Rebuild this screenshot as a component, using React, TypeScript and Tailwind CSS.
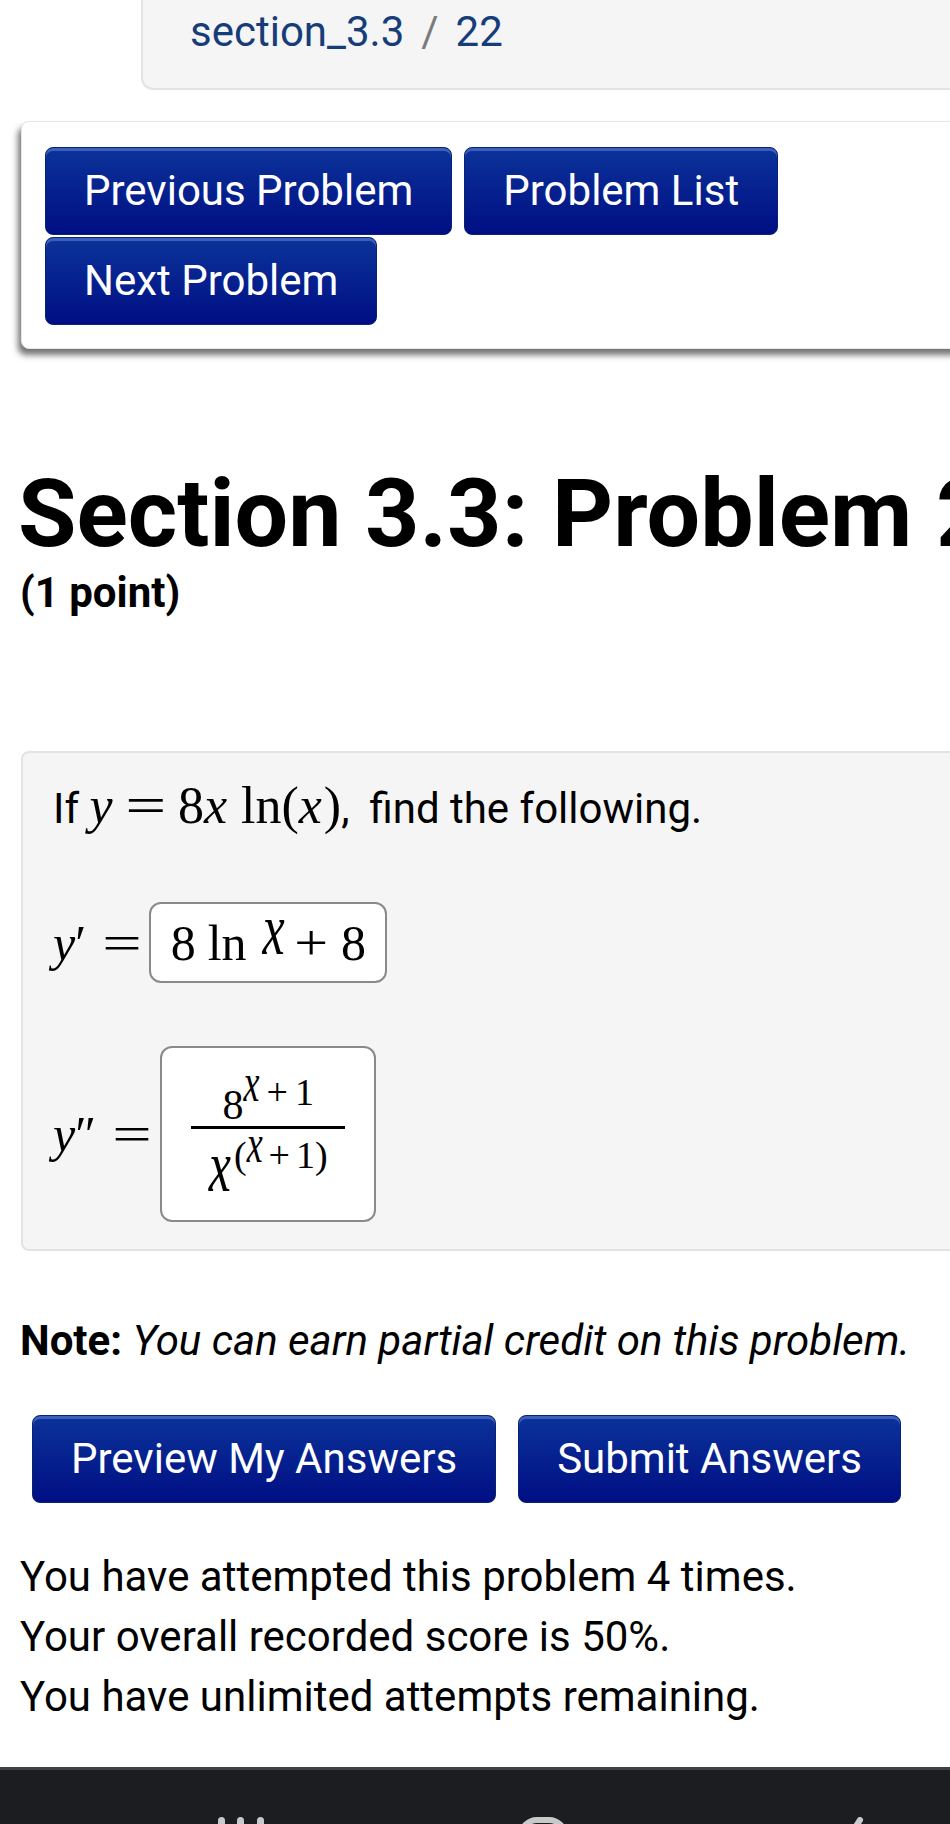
import React from "react";

const btn =
  "h-[88px] px-[38px] flex items-center rounded-[8px] border border-[#0a2370] bg-[linear-gradient(#0b3399,#000e84)] shadow-[inset_0_3px_0_rgba(120,150,230,0.45)] text-white text-[42px] leading-[60px] whitespace-nowrap";

const serif = "font-['Liberation_Serif','DejaVu_Serif',serif]";

function TallX({ size }: { size: string }) {
  return <span className={`inline-block italic scale-y-150 origin-bottom ${size}`}>x</span>;
}

function Eq() {
  return <span className="inline-block scale-x-[1.4]">=</span>;
}

export default function App() {
  return (
    <div className="w-[950px] h-[1824px] overflow-hidden bg-white flex flex-col font-['Roboto','Liberation_Sans',sans-serif] text-[42px] leading-[60px] text-black">
      <div className="w-[1200px] flex flex-col">
        {/* breadcrumb */}
        <div className="ml-[141px] h-[90px] bg-[#f5f5f5] border-l-2 border-b-2 border-[#e3e3e3] rounded-bl-[12px] pl-[47px] pt-[2px] whitespace-nowrap">
          <span className="text-[#163d7a]">section_3.3</span>
          <span className="text-[#7a7a7a] mx-[17px]">/</span>
          <span className="text-[#163d7a]">22</span>
        </div>

        {/* nav card */}
        <div className="mt-[31px] ml-[21px] h-[228px] bg-white rounded-[8px] border border-[#e6e6e6] shadow-[-3px_6px_6px_rgba(0,0,0,0.55)] pl-[23px] pt-[25px] flex flex-col gap-[2px]">
          <div className="flex gap-[12px]">
            <button className={btn}>Previous Problem</button>
            <button className={btn}>Problem List</button>
          </div>
          <div className="flex">
            <button className={btn}>Next Problem</button>
          </div>
        </div>

        {/* heading */}
        <h1 className="mt-[111px] pl-[18px] text-[95px] leading-[108px] font-bold whitespace-nowrap">
          Section 3.3: Problem 22
        </h1>
        <div className="-mt-[5px] pl-[20px] font-bold">(1 point)</div>

        {/* problem box */}
        <div className="mt-[128px] ml-[21px] h-[500px] bg-[#f5f5f5] border-2 border-[#e3e3e3] rounded-[8px] pl-[30px] pt-[26px] flex flex-col">
          <div className="whitespace-nowrap">
            If{" "}
            <span className={`${serif} text-[52px] leading-none`}>
              <span className="italic">y</span>
              <span className="mx-[18px]"><Eq /></span>
              <span>8</span>
              <span className="italic">x</span>
              <span className="ml-[14px]">ln(</span>
              <span className="italic">x</span>
              <span className="ml-[2px]">)</span>
            </span>
            ,<span className="ml-[20px]">find the following.</span>
          </div>

          {/* y' row */}
          <div className="mt-[63px] flex items-center">
            <span className={`${serif} text-[50px] leading-none whitespace-nowrap`}>
              <span className="italic">y</span>
              <span>′</span>
              <span className="ml-[22px]"><Eq /></span>
            </span>
            <div className={`ml-[13px] w-[238px] h-[81px] bg-white border-2 border-[#8a8a8a] rounded-[12px] flex items-center justify-center ${serif} text-[50px] leading-[60px] whitespace-nowrap`}>
              <span>8</span>
              <span className="ml-[12px]">ln</span>
              <span className="ml-[16px]"><TallX size="text-[50px]" /></span>
              <span className="ml-[12px] inline-block scale-x-[1.2]">+</span>
              <span className="ml-[16px]">8</span>
            </div>
          </div>

          {/* y'' row */}
          <div className="mt-[63px] flex items-center">
            <span className={`${serif} text-[50px] leading-none whitespace-nowrap`}>
              <span className="italic">y</span>
              <span>″</span>
              <span className="ml-[22px]"><Eq /></span>
            </span>
            <div className={`ml-[14px] w-[216px] h-[176px] bg-white border-2 border-[#8a8a8a] rounded-[12px] flex justify-center pt-[36px] ${serif}`}>
              <div className="flex flex-col items-center w-[154px]">
                <div className="h-[40px] leading-[42px] mb-[2px] whitespace-nowrap">
                  <span className="text-[42px]">8</span>
                  <span className="relative -top-[14px] text-[38px]">
                    <TallX size="text-[36px]" />
                    <span className="ml-[7px]">+</span>
                    <span className="ml-[7px]">1</span>
                  </span>
                </div>
                <div className="h-[3px] w-full bg-black" />
                <div className="pt-[24px] h-[70px] leading-[50px] whitespace-nowrap">
                  <TallX size="text-[50px]" />
                  <span className="relative -top-[27px] text-[38px] ml-[3px]">
                    (<TallX size="text-[36px]" />
                    <span className="ml-[6px]">+</span>
                    <span className="ml-[6px]">1</span>)
                  </span>
                </div>
              </div>
            </div>
          </div>
        </div>

        {/* note */}
        <div className="mt-[60px] pl-[20px] whitespace-nowrap">
          <span className="font-bold">Note:</span>{" "}
          <span className="italic">You can earn partial credit on this problem.</span>
        </div>

        {/* action buttons */}
        <div className="mt-[44px] ml-[32px] flex gap-[22px]">
          <button className={btn}>Preview My Answers</button>
          <button className={btn}>Submit Answers</button>
        </div>

        {/* attempts */}
        <div className="mt-[44px] pl-[20px] whitespace-nowrap">
          <div>You have attempted this problem 4 times.</div>
          <div>Your overall recorded score is 50%.</div>
          <div>You have unlimited attempts remaining.</div>
        </div>
      </div>

      {/* system nav bar */}
      <div className="mt-auto h-[57px] shrink-0 bg-[#1b1d20] border-t-[3px] border-[#3e4043] overflow-hidden flex items-start pt-[47px]">
        <svg className="ml-[218px] shrink-0" width="46" height="46" viewBox="0 0 46 46">
          <rect x="0" y="0" width="7" height="40" rx="3.5" fill="#c9c9c9" />
          <rect x="19" y="0" width="7" height="40" rx="3.5" fill="#c9c9c9" />
          <rect x="39" y="0" width="7" height="40" rx="3.5" fill="#c9c9c9" />
        </svg>
        <svg className="ml-[254px] shrink-0" width="50" height="50" viewBox="0 0 50 50">
          <rect x="3" y="3" width="44" height="44" rx="16" fill="none" stroke="#c9c9c9" strokeWidth="6" />
        </svg>
        <svg className="ml-[276px] shrink-0" width="30" height="46" viewBox="0 0 30 46">
          <path d="M16 3 L3 23 L16 43" fill="none" stroke="#c9c9c9" strokeWidth="6" strokeLinecap="round" strokeLinejoin="round" />
        </svg>
      </div>
    </div>
  );
}
